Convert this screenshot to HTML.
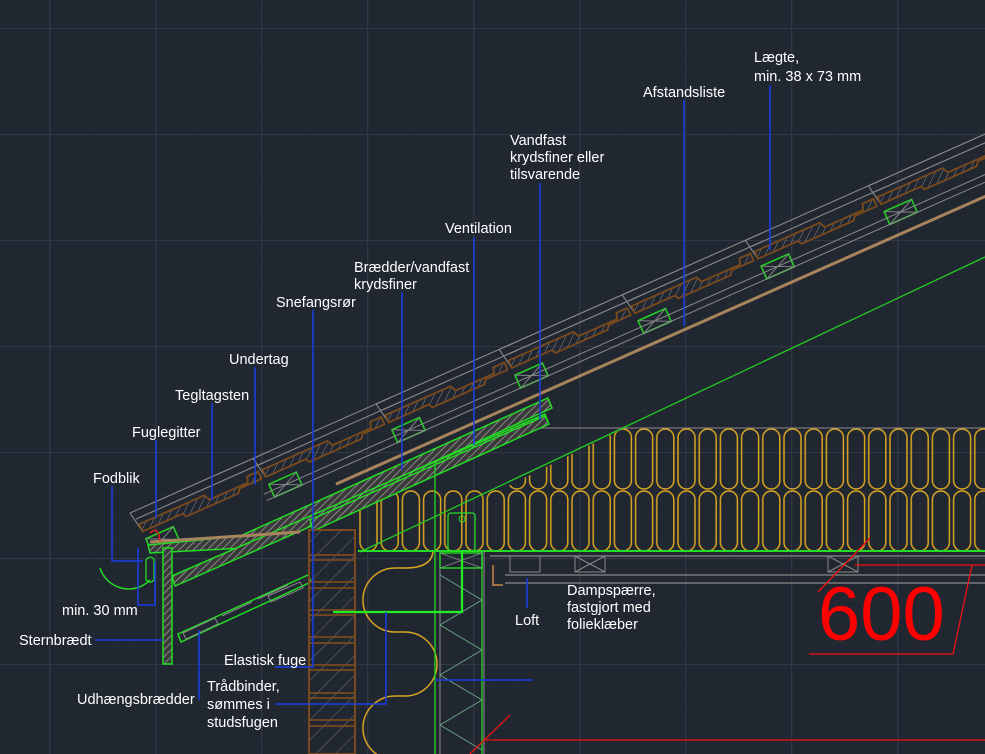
<!DOCTYPE html>
<html><head><meta charset="utf-8"><style>
html,body{margin:0;padding:0;background:#212731;width:985px;height:754px;overflow:hidden}
svg{display:block}
text{font-family:"Liberation Sans",sans-serif;font-size:14.5px;fill:#ffffff}
</style></head><body>
<svg width="985" height="754" viewBox="0 0 985 754" xmlns="http://www.w3.org/2000/svg">
<defs>
<pattern id="gmin" x="7.8" y="7" width="21.2" height="21.2" patternUnits="userSpaceOnUse">
<path d="M0 0V21.2M0 0H21.2" stroke="#272d38" stroke-width="1" fill="none"/></pattern>
<pattern id="gmaj" x="49" y="28" width="106" height="106" patternUnits="userSpaceOnUse">
<path d="M0.5 0V106M0 0.5H106" stroke="#303644" stroke-width="1.2" fill="none"/></pattern>
<pattern id="hatch" width="5" height="5" patternUnits="userSpaceOnUse" patternTransform="rotate(45)">
<rect width="5" height="5" fill="#3a3a3a"/><path d="M0 0V5" stroke="#9a9a9a" stroke-width="1.6"/></pattern>
<pattern id="hatchB" width="6" height="6" patternUnits="userSpaceOnUse" patternTransform="rotate(50)">
<path d="M0 0V6" stroke="#a0a0a0" stroke-width="0.8"/></pattern>
<pattern id="brickH" width="14" height="14" patternUnits="userSpaceOnUse" patternTransform="rotate(45)">
<path d="M0 0V14" stroke="#888" stroke-width="0.8"/></pattern>
<pattern id="loops" x="358" y="490" width="21.2" height="62" patternUnits="userSpaceOnUse">
<rect x="2" y="1" width="17" height="60" rx="8.5" fill="none" stroke="#d9a520" stroke-width="1.5"/></pattern>
<pattern id="loops2" x="358" y="428" width="21.2" height="62" patternUnits="userSpaceOnUse">
<rect x="2" y="1" width="17" height="60" rx="8.5" fill="none" stroke="#d9a520" stroke-width="1.5"/></pattern>
<clipPath id="topclip"><polygon points="500,490 985,248 985,490"/></clipPath>
<g id="tile">
<path d="M0 0H150M3 8H150M0 0L4 22" stroke="#8a8a8a" stroke-width="1.1" fill="none"/>
<path d="M4 14H75l3 6H120l2 -6H134V22H110l-3 4H50l-2 -4H4Z" fill="url(#hatchB)" stroke="#7a4a1c" stroke-width="1.8"/>
<rect x="4" y="30" width="30" height="14" fill="none" stroke="#22cc22" stroke-width="1.6"/>
<path d="M4 30L34 44M34 30L4 44" stroke="#8a8a8a" stroke-width="0.9"/>
</g>
</defs>
<rect width="985" height="754" fill="#212731"/>
<rect width="985" height="754" fill="url(#gmin)"/>
<rect width="985" height="754" fill="url(#gmaj)"/>

<rect x="358" y="490" width="627" height="62" fill="url(#loops)"/>
<rect x="358" y="428" width="627" height="62" fill="url(#loops2)" clip-path="url(#topclip)"/>
<path d="M520 428H985" stroke="#8a8a8a" stroke-width="1"/>

<g transform="translate(130,513) rotate(-23.9)">
<use href="#tile" x="0"/><use href="#tile" x="134.6"/><use href="#tile" x="269.2"/>
<use href="#tile" x="403.8"/><use href="#tile" x="538.4"/><use href="#tile" x="673"/><use href="#tile" x="807.6"/><use href="#tile" x="942"/>
<path d="M130 37H1100M130 44H1100" stroke="#8a8a8a" stroke-width="1"/>
<path d="M200 57H1100" stroke="#a8845c" stroke-width="3"/>
</g>
<path d="M360 552L985 257" stroke="#22cc22" stroke-width="1.3"/>

<polygon points="148,545 240,536 548,398 552,408 244,548 150,553" fill="url(#hatch)" stroke="#22dd22" stroke-width="1.5"/>
<polygon points="172,576 545,414 548,422 175,586" fill="url(#hatch)" stroke="#22dd22" stroke-width="1.5"/>
<polygon points="310,520 545,416 549,424 313,531" fill="url(#hatch)" stroke="#22dd22" stroke-width="1.5"/>
<path d="M150 542L300 532" stroke="#a8845c" stroke-width="3"/>
<rect x="163" y="548" width="9" height="116" fill="url(#hatch)" stroke="#22dd22" stroke-width="1.5"/>
<polygon points="178,634 308,575 311,582 181,642" fill="none" stroke="#22dd22" stroke-width="1.5"/>
<path d="M183 633l32-15 3 6-32 15zM222 616l30-14M258 599l30-14M268 596l32-14 3 6-32 14z" stroke="#888" stroke-width="1" fill="none"/>
<path d="M100 568 A30 30 0 0 0 150 580" stroke="#22dd22" stroke-width="1.5" fill="none"/>
<path d="M146 560q5-6 8 0v20q-4 4-8 0z" stroke="#22dd22" stroke-width="1.3" fill="none"/>
<path d="M150 533q8 -8 10 8" stroke="#e02020" stroke-width="1.5" fill="none"/>

<rect x="309" y="530" width="46" height="224" fill="url(#brickH)" stroke="#7a4a1c" stroke-width="2"/>
<path d="M309 555H355M309 560H355M309 582H355M309 588H355M309 610H355M309 615H355M309 637H355M309 643H355M309 665H355M309 670H355M309 693H355M309 698H355M309 720H355M309 726H355" stroke="#7a4a1c" stroke-width="1.8"/>

<path d="M433 552 q-2 16 -28 16 h-10 a32 32 0 0 0 0 64 h10 a32 32 0 0 1 0 64 h-10 a32 32 0 0 0 0 64 h10 a32 32 0 0 1 28 32" stroke="#d9a520" stroke-width="1.5" fill="none"/>

<path d="M358 551H985" stroke="#22dd22" stroke-width="2"/>
<path d="M435 460V754M482 551V754" stroke="#22cc22" stroke-width="1.4"/>
<path d="M440 551V754M484 551V754" stroke="#8a8a8a" stroke-width="1"/>
<path d="M440 575L482 600L440 625L482 650L440 675L482 700L440 725L482 750" stroke="#6aa080" stroke-width="1" fill="none"/>
<rect x="440" y="553" width="42" height="15" fill="none" stroke="#22dd22" stroke-width="1.4"/>
<path d="M440 553L482 568M482 553L440 568" stroke="#888" stroke-width="0.9"/>
<path d="M333 612H462V551" stroke="#22ee22" stroke-width="2.2" fill="none"/>
<rect x="448" y="513" width="27" height="38" rx="3" fill="none" stroke="#22dd22" stroke-width="1.3"/>
<circle cx="462" cy="519" r="3" fill="none" stroke="#22dd22"/>
<path d="M490 556H985M505 575H985M505 583H985" stroke="#8a8a8a" stroke-width="1.2"/>
<rect x="510" y="556" width="30" height="16" fill="none" stroke="#888"/>
<rect x="828" y="556" width="30" height="16" fill="none" stroke="#888"/>
<path d="M575 556l30 16M605 556l-30 16M828 556l30 16M858 556l-30 16" stroke="#888"/>
<rect x="575" y="556" width="30" height="16" fill="none" stroke="#888"/>
<path d="M493 565v20h10" stroke="#a07040" stroke-width="2" fill="none"/>

<path d="M818 592L870 538M855 565H985M972 565L953 654H809M483 740H985M470 754L510 715" stroke="#ee1111" stroke-width="1.3" fill="none"/>
<text x="818" y="640" style="font-size:76px;fill:#ff0000">600</text>

<g stroke="#1a3ee8" stroke-width="1.5" fill="none">
<path d="M770 85V250M684 100V326M540 183V420M474 237V445M402 292V470M313 310V667H275M255 367V485M212 403V500M156 440V518M112 486V561H143M138 548V605H155V562M95 640H163M199 630V700M275 704H386V612M527 578V608M435 680H533"/>
</g>

<text x="754" y="62">Lægte,</text>
<text x="754" y="81">min. 38 x 73 mm</text>
<text x="643" y="97">Afstandsliste</text>
<text x="510" y="145">Vandfast</text>
<text x="510" y="162">krydsfiner eller</text>
<text x="510" y="179">tilsvarende</text>
<text x="445" y="233">Ventilation</text>
<text x="354" y="272">Brædder/vandfast</text>
<text x="354" y="289">krydsfiner</text>
<text x="276" y="307">Snefangsrør</text>
<text x="229" y="364">Undertag</text>
<text x="175" y="400">Tegltagsten</text>
<text x="132" y="437">Fuglegitter</text>
<text x="93" y="483">Fodblik</text>
<text x="62" y="615">min. 30 mm</text>
<text x="19" y="645">Sternbrædt</text>
<text x="77" y="704">Udhængsbrædder</text>
<text x="224" y="665">Elastisk fuge</text>
<text x="207" y="691">Trådbinder,</text>
<text x="207" y="709">sømmes i</text>
<text x="207" y="727">studsfugen</text>
<text x="515" y="625">Loft</text>
<text x="567" y="595">Dampspærre,</text>
<text x="567" y="612">fastgjort med</text>
<text x="567" y="629">folieklæber</text>
</svg>
</body></html>
